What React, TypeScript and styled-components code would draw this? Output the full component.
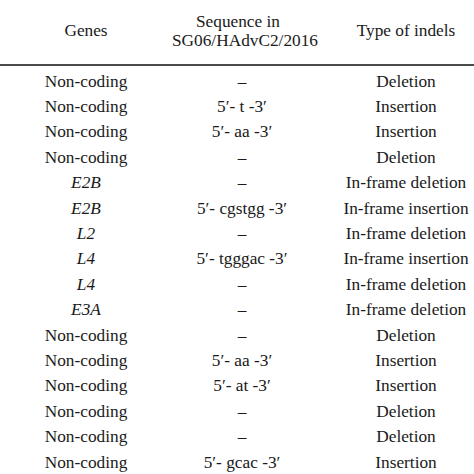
import styled, { createGlobalStyle } from "styled-components";

const GlobalStyle = createGlobalStyle`
  html, body {
    margin: 0;
    padding: 0;
    background: #ffffff;
    overflow: hidden;
  }
`;

const serif = `"Liberation Serif", "Times New Roman", serif`;

const Table = styled.div`
  width: 474px;
  display: flex;
  flex-direction: column;
  font-family: ${serif};
  color: #1a1a1a;
`;

const Row = styled.div`
  display: grid;
  grid-template-columns: 172px 140px 1fr;
  align-items: center;
  height: 25.4px;
  font-size: 17.3px;
`;

const HeadRow = styled(Row)`
  height: 66px;
  line-height: 19px;
  border-bottom: 2px solid #4a4a4a;
  box-sizing: border-box;
  padding-bottom: 3px;
  margin-bottom: 3px;
`;

const Cell = styled.div<{ $italic?: boolean; $shift?: number }>`
  text-align: center;
  white-space: nowrap;
  font-style: ${(p) => (p.$italic ? "italic" : "normal")};
  padding-right: ${(p) => (p.$shift ? `${p.$shift}px` : "0")};
`;

const TypeCell = styled(Cell)`
  padding-left: 26px;
`;

type Item = { gene: string; italic?: boolean; seq: string; type: string };

const rows: Item[] = [
  { gene: "Non-coding", seq: "–", type: "Deletion" },
  { gene: "Non-coding", seq: "5′- t -3′", type: "Insertion" },
  { gene: "Non-coding", seq: "5′- aa -3′", type: "Insertion" },
  { gene: "Non-coding", seq: "–", type: "Deletion" },
  { gene: "E2B", italic: true, seq: "–", type: "In-frame deletion" },
  { gene: "E2B", italic: true, seq: "5′- cgstgg -3′", type: "In-frame insertion" },
  { gene: "L2", italic: true, seq: "–", type: "In-frame deletion" },
  { gene: "L4", italic: true, seq: "5′- tgggac -3′", type: "In-frame insertion" },
  { gene: "L4", italic: true, seq: "–", type: "In-frame deletion" },
  { gene: "E3A", italic: true, seq: "–", type: "In-frame deletion" },
  { gene: "Non-coding", seq: "–", type: "Deletion" },
  { gene: "Non-coding", seq: "5′- aa -3′", type: "Insertion" },
  { gene: "Non-coding", seq: "5′- at -3′", type: "Insertion" },
  { gene: "Non-coding", seq: "–", type: "Deletion" },
  { gene: "Non-coding", seq: "–", type: "Deletion" },
  { gene: "Non-coding", seq: "5′- gcac -3′", type: "Insertion" },
];

export default function App() {
  return (
    <>
      <GlobalStyle />
      <Table>
        <HeadRow>
          <Cell>Genes</Cell>
          <Cell $shift={8}>
            Sequence in
            <br />
            SG06/HAdvC2/2016
          </Cell>
          <TypeCell>Type of indels</TypeCell>
        </HeadRow>
        {rows.map((r, i) => (
          <Row key={i}>
            <Cell $italic={r.italic}>{r.gene}</Cell>
            <Cell>{r.seq}</Cell>
            <TypeCell>{r.type}</TypeCell>
          </Row>
        ))}
      </Table>
    </>
  );
}
